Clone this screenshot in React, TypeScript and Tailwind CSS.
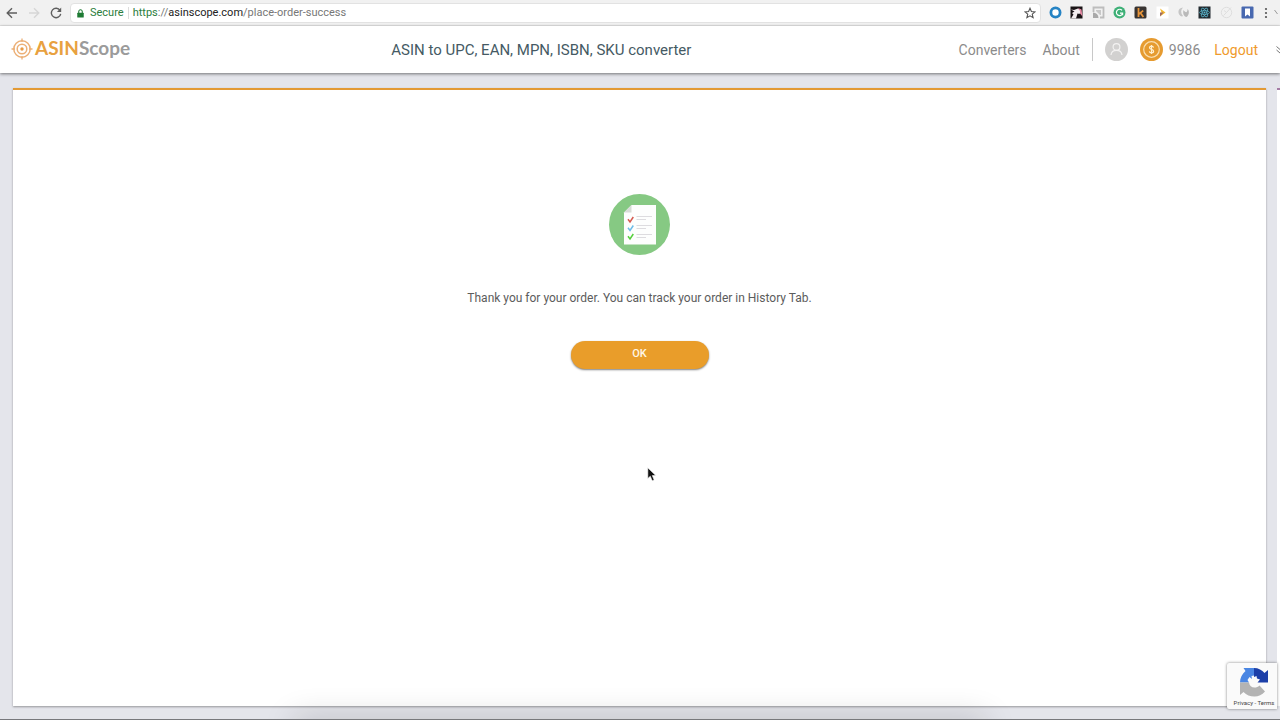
import React from 'react'

const BackIcon = ({ className }: { className: string }) => (
  <svg viewBox="0 0 12 12" className={className} fill="none" stroke="currentColor" strokeWidth="1.4">
    <path d="M11 6H1.5M6 1.2L1.2 6L6 10.8" />
  </svg>
)

const ReloadIcon = () => (
  <svg viewBox="0 0 12 12" className="h-3 w-3" fill="none" stroke="#5f5f5f" strokeWidth="1.4">
    <path d="M10 3.4A4.7 4.7 0 1 0 10.7 6.8" />
    <path d="M11.2 0.6V4.9H6.9Z" fill="#5f5f5f" stroke="none" />
  </svg>
)

const LockIcon = () => (
  <svg viewBox="0 0 8 10" className="h-[9px] w-[7px]">
    <rect x="0.3" y="4" width="7.4" height="5.6" rx="0.6" fill="#1e7b34" />
    <path d="M2 4.5V2.8a2 2 0 0 1 4 0V4.5" fill="none" stroke="#1e7b34" strokeWidth="1.2" />
  </svg>
)

const StarIcon = () => (
  <svg viewBox="0 0 24 24" className="h-3 w-3" fill="none" stroke="#555" strokeWidth="2.2">
    <path d="M12 2.5l2.8 6.6 7.2.6-5.5 4.7 1.7 7L12 17.7l-6.2 3.7 1.7-7L2 9.7l7.2-.6z" />
  </svg>
)

const extensions = [
  {
    name: 'Ring',
    art: <circle cx="6.5" cy="6.5" r="4.6" fill="#fff" stroke="#2583c4" strokeWidth="2.8" />,
  },
  {
    name: 'Unicorn',
    art: (
      <>
        <rect x="0.5" y="0.5" width="12" height="12" fill="#1a1416" />
        <path d="M1 3.5L4 4L8 2.5L11 5L9.5 8L7.5 7.5L6 12.5H1L3.5 8.5L2 7L4.5 5.5Z" fill="#f4eef0" />
        <path d="M8 2L11.5 3.5L12.5 10.5L10 7.5V5Z" fill="#e58aa4" />
      </>
    ),
  },
  {
    name: 'Cast',
    art: (
      <>
        <path d="M1.5 6V1.5H11.5V11.5H8" fill="none" stroke="#bdbdbd" strokeWidth="1.8" />
        <path d="M1 6.5A5.5 5.5 0 0 1 6.5 12H1Z" fill="#a9a9a9" />
        <path d="M4 4H9V9H8L4 5Z" fill="#c8c8c8" />
      </>
    ),
  },
  {
    name: 'Grammar',
    art: (
      <>
        <circle cx="6.5" cy="6.5" r="6" fill="#3eb077" />
        <path d="M9 4.3A3.200 3.200 0 1 0 9.400 8M7 7.200H9.600V9.200" fill="none" stroke="#fff" strokeWidth="1.2" />
      </>
    ),
  },
  {
    name: 'Keyword',
    art: (
      <>
        <rect x="0.5" y="0.5" width="12" height="12" rx="1.5" fill="#383432" />
        <path d="M4.500 2V11M9.200 4.600L5 8M6.500 7L9.400 11" fill="none" stroke="#e8953a" strokeWidth="1.8" />
      </>
    ),
  },
  {
    name: 'Arrow',
    art: (
      <>
        <rect x="0.5" y="0.5" width="12" height="12" fill="#fff" />
        <path d="M4 2.500L9.500 6.500L4 10.500L5.500 6.500Z" fill="#f3b62d" />
        <path d="M4 6.500H7.500L4 10.500Z" fill="#9c6a67" />
      </>
    ),
  },
  {
    name: 'Similar',
    art: (
      <>
        <path d="M6 1.500C1 2 0 7 3.500 10C4.500 10.500 5.500 10.500 6 10C3.500 7 3.500 4 6 1.500Z" fill="#c5c5c5" />
        <path d="M6.500 4C5.500 7.500 7 10.500 9.500 11C12.500 9 12.500 4.500 10.500 3C10.500 7 8.500 7 6.500 4Z" fill="#b9b9b9" />
      </>
    ),
  },
  {
    name: 'React',
    art: (
      <>
        <rect x="0.5" y="0.5" width="12" height="12" fill="#222b30" />
        <g fill="none" stroke="#5cbad2" strokeWidth="0.7">
          <ellipse cx="6.5" cy="6.5" rx="5" ry="2" />
          <ellipse cx="6.5" cy="6.5" rx="5" ry="2" transform="rotate(60 6.5 6.5)" />
          <ellipse cx="6.5" cy="6.5" rx="5" ry="2" transform="rotate(120 6.5 6.5)" />
        </g>
        <circle cx="6.5" cy="6.5" r="1" fill="#5cbad2" />
      </>
    ),
  },
  {
    name: 'Target',
    art: (
      <g fill="none" stroke="#dedede">
        <circle cx="6.5" cy="6.5" r="5.2" />
        <path d="M3.500 9.500L6.500 6.500L11 1.500M4 4.500L6.500 6.500" />
      </g>
    ),
  },
  {
    name: 'Bookmark',
    art: (
      <>
        <rect x="0.5" y="0.5" width="12" height="12" rx="1" fill="#4868b0" />
        <path d="M4 2.500H9V10.500L6.500 8.500L4 10.500Z" fill="#fff" />
      </>
    ),
  },
]

const LogoIcon = () => (
  <svg viewBox="0 0 22 22" className="h-[22px] w-[22px]" fill="none" stroke="#ecb077">
    <circle cx="11" cy="11" r="8.2" strokeWidth="1.5" />
    <circle cx="11" cy="11" r="4.8" strokeWidth="1.5" />
    <circle cx="11" cy="11" r="1.7" fill="#e89a45" stroke="none" />
    <path d="M11 0.5V4M11 18V21.5M0.5 11H4M18 11H21.5" strokeWidth="1.3" />
  </svg>
)

const UserIcon = () => (
  <svg viewBox="0 0 23 23" className="h-[23px] w-[23px]">
    <circle cx="11.5" cy="11.5" r="11.5" fill="#d2d1d0" />
    <g fill="none" stroke="#f3f2f1" strokeWidth="1.2">
      <circle cx="11.5" cy="9" r="3.4" />
      <path d="M6 17C6.300 13.800 8.500 12.300 11.500 12.300S16.700 13.800 17 17" />
    </g>
  </svg>
)

const CoinIcon = () => (
  <svg viewBox="0 0 23 23" className="h-[23px] w-[23px]">
    <circle cx="11.5" cy="11.5" r="11.5" fill="#e69b30" />
    <circle cx="11.5" cy="11.5" r="7.8" fill="none" stroke="#f9dfb0" strokeWidth="1.2" />
    <path
      d="M13.500 9.600C13.300 8.600 12.600 8.200 11.500 8.200C10.300 8.200 9.500 8.700 9.500 9.700C9.500 12 13.600 10.800 13.600 13.200C13.600 14.300 12.700 14.800 11.500 14.800C10.300 14.800 9.500 14.300 9.300 13.300M11.500 7V16"
      fill="none"
      stroke="#fff0d0"
      strokeWidth="1.2"
    />
  </svg>
)

const OrderIcon = () => (
  <svg viewBox="0 0 61 61" className="h-[61px] w-[61px]">
    <circle cx="30.5" cy="30.5" r="30.5" fill="#86c983" />
    <path d="M22.500 11H47V50.500H15V18.500Z" fill="#fdfefd" />
    <path d="M22.500 11V18.500H15Z" fill="#d8dcd8" />
    <g fill="none" strokeWidth="1.5">
      <path d="M19 25.300L21 28L24.300 23" stroke="#d65a50" />
      <path d="M19 33.800L21 36.500L24.300 31.500" stroke="#6dbce8" />
      <path d="M19 42.300L21 45L24.300 40" stroke="#56cf3c" />
    </g>
    <path
      d="M27.500 22.500H43M27.500 25.500H37M27.500 31.500H43M27.500 34.500H37M27.500 40.500H43M27.500 43.500H37"
      stroke="#dddcdf"
      strokeWidth="1"
    />
  </svg>
)

const CaptchaIcon = () => (
  <svg viewBox="0 0 30 30" className="h-[30px] w-[30px]">
    <path d="M15 1H4.500L6.500 4C3 7 1 11 1 15.500H10L8.500 13L10.500 10L13 12L12.500 9L15 8.500Z" fill="#4a86e3" />
    <path d="M15 1C19.500 1 23 3 25.500 6L29 3V15.500H18.500L21 12.500L18 11.500L17.500 9L15 10Z" fill="#1c3fa8" />
    <path d="M1 15.500H10C10.500 19 12.500 20.500 15.500 20.500C17.500 20.500 19 20 20.500 18.500L26 24.500C23 28 19.500 29.500 15.500 29.500C11 29.500 7.500 28 4.500 25L1 28Z" fill="#b3b3b3" />
  </svg>
)

const Cursor = () => (
  <svg viewBox="0 0 10 15" className="absolute top-[467px] left-1/2 ml-[7px] h-[15px] w-[10px]">
    <path d="M0.800 0.800V11.500L3.300 9.200L5.200 13.800L7.200 13L5.300 8.600H8.800Z" fill="#111" stroke="#fff" strokeWidth="0.6" />
  </svg>
)

const BrowserBar = () => (
  <div className="flex h-[26px] items-center border-b border-[#e4e4e4] bg-[#f1f1f1] pr-0.5 pl-1.5">
    <button aria-label="Back"><BackIcon className="h-3 w-3 text-[#5f5f5f]" /></button>
    <button aria-label="Forward" className="ml-2.5"><BackIcon className="h-3 w-3 rotate-180 text-[#d6d6d6]" /></button>
    <button aria-label="Reload" className="ml-2.5"><ReloadIcon /></button>
    <div className="ml-2 flex h-5 flex-1 items-center rounded-sm border border-[#e2e2e2] bg-white pt-px pr-1 pl-1.5 text-[11px]">
      <LockIcon />
      <span className="ml-1.5 text-[#2b7d3c]">Secure</span>
      <span className="mx-1 h-3 w-px bg-[#dcdcdc]"></span>
      <p className="flex-1 text-[#777]">
        <span className="text-[#2b7d3c]">https</span>://<span className="text-[#222]">asinscope.com</span>/place-order-success
      </p>
      <button aria-label="Bookmark this page"><StarIcon /></button>
    </div>
    <div className="ml-2 flex w-[205px] items-center justify-between">
      {extensions.map((item) => (
        <button key={item.name} aria-label={item.name}>
          <svg viewBox="0 0 13 13" className="h-[13px] w-[13px]">{item.art}</svg>
        </button>
      ))}
    </div>
    <button aria-label="Menu" className="ml-2.5">
      <svg viewBox="0 0 4 12" className="h-3 w-1" fill="#555">
        <circle cx="2" cy="2" r="1.1" />
        <circle cx="2" cy="6" r="1.1" />
        <circle cx="2" cy="10" r="1.1" />
      </svg>
    </button>
    <svg viewBox="0 0 4 8" className="ml-1.5 h-2 w-1" fill="none" stroke="#999">
      <path d="M0.500 1L3.500 5" />
    </svg>
  </div>
)

const Header = () => (
  <header className="z-10 flex h-[47px] items-center bg-white pl-[11px] shadow-[0_1px_3px_rgba(0,0,0,0.5)]">
    <a href="#" className="flex items-center gap-0.5 pb-0.5 font-[Lato,sans-serif] text-[19px] font-bold text-[#9b9b9b]">
      <LogoIcon />
      <span><span className="text-[#e8a140]">ASIN</span>Scope</span>
    </a>
    <h1 className="flex-1 pt-0.5 pr-1.5 text-center text-[15px] text-[#455a64]">ASIN to UPC, EAN, MPN, ISBN, SKU converter</h1>
    <nav className="flex items-center text-sm text-[#8b8b8b]">
      <a href="#">Converters</a>
      <a href="#" className="ml-4">About</a>
      <span className="mx-3 h-[23px] w-px bg-[#c8c8c8]"></span>
      <a href="#" aria-label="Account"><UserIcon /></a>
      <span className="ml-3 flex items-center gap-1.5"><CoinIcon />9986</span>
      <a href="#" className="ml-3.5 text-[#ef9a2c]">Logout</a>
      <svg viewBox="0 0 4 8" className="ml-[18px] h-2 w-1" fill="none" stroke="#777">
        <path d="M0.500 0.500L4 3.500M0.500 4L4 7" />
      </svg>
    </nav>
  </header>
)

const App = () => {
  return (
    <div className="relative flex min-h-screen flex-col overflow-hidden border-b border-[#77787c] bg-[#e4e5eb] font-[Roboto,sans-serif]">
      <BrowserBar />
      <Header />
      <div className="flex flex-1 gap-[11px] pt-[15px] pb-[13px] pl-[13px]">
        <main className="flex flex-1 flex-col items-center border-t-2 border-[#e39a35] bg-white pt-[104px] shadow-[0_1px_2px_rgba(0,0,0,0.35)]">
          <OrderIcon />
          <p className="mt-[33px] text-xs leading-5 text-[#5c5c5c]">Thank you for your order. You can track your order in History Tab.</p>
          <button className="mt-[33px] h-7 w-[138px] rounded-full bg-[#e99d2a] pb-0.5 text-[11px] font-medium text-[#fff6e5] shadow-[0_1px_2px_rgba(0,0,0,0.5)]">OK</button>
        </main>
        <aside className="w-[3px] border-t-2 border-[#a57ba5] bg-white"></aside>
      </div>
      <div className="absolute inset-x-[23%] -bottom-5 h-5 shadow-[0_0_32px_rgba(0,0,0,0.2)]"></div>
      <a href="#" className="absolute right-[3px] bottom-2.5 flex h-[46px] w-[50px] flex-col items-center rounded-l-xs bg-[#fafafa] pt-1 pl-1 shadow-[0_0_3px_rgba(0,0,0,0.5)]">
        <CaptchaIcon />
        <span className="pt-0.5 text-[6px] leading-2 whitespace-nowrap text-[#444]">Privacy - Terms</span>
      </a>
      <Cursor />
    </div>
  )
}

export default App
